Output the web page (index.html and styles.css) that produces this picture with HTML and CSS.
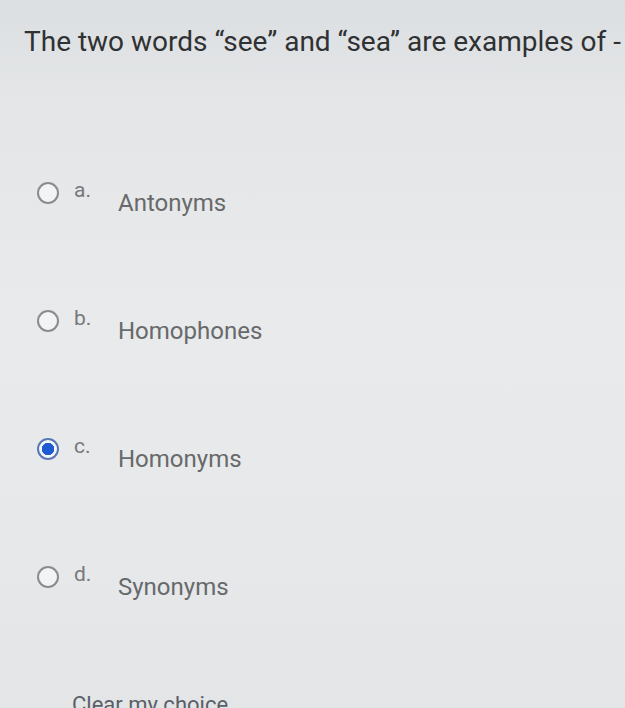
FILE: index.html
```html
<!DOCTYPE html>
<html lang="en">
<head>
<meta charset="utf-8">
<title>Question</title>
<link rel="stylesheet" href="styles.css">
</head>
<body>
<div class="page">
  <h1 class="question">The two words “see” and “sea” are examples of -</h1>
  <div class="options">
    <div class="option">
      <span class="radio"></span>
      <span class="letter">a.</span>
      <span class="answer">Antonyms</span>
    </div>
    <div class="option">
      <span class="radio"></span>
      <span class="letter">b.</span>
      <span class="answer">Homophones</span>
    </div>
    <div class="option">
      <span class="radio checked"></span>
      <span class="letter">c.</span>
      <span class="answer">Homonyms</span>
    </div>
    <div class="option">
      <span class="radio"></span>
      <span class="letter">d.</span>
      <span class="answer">Synonyms</span>
    </div>
  </div>
  <div class="clear">Clear my choice</div>
</div>
</body>
</html>
```
FILE: styles.css
```css
html, body {
  margin: 0;
  padding: 0;
  height: 100%;
  overflow: hidden;
}
body {
  background: linear-gradient(180deg, #dcdfe1 0%, #e4e6e8 15%, #e8eaeb 45%, #e6e8e9 80%, #e3e5e6 100%);
  font-family: Roboto, "Liberation Sans", sans-serif;
}
.page {
  padding: 26px 0 0 24px;
}
.question {
  margin: 0;
  font-size: 28px;
  line-height: 32px;
  font-weight: 400;
  color: #2f3133;
  white-space: nowrap;
}
.options {
  margin-top: 124px;
}
.option {
  display: flex;
  align-items: flex-start;
  height: 128px;
}
.radio {
  box-sizing: border-box;
  width: 22px;
  height: 22px;
  margin-left: 13px;
  border: 2px solid #8a8c8e;
  border-radius: 50%;
  background: #f2f3f4;
  flex: none;
}
.radio.checked {
  border-color: #5a78b4;
  background: radial-gradient(circle, #1d5bd3 0 6px, #f4f6fa 6.5px);
}
.letter {
  width: 44px;
  margin-left: 15px;
  font-size: 21px;
  line-height: 16px;
  color: #76787a;
}
.answer {
  margin-top: 9px;
  font-size: 24px;
  line-height: 24px;
  color: #67696b;
}
.clear {
  margin-left: 48px;
  font-size: 22px;
  line-height: 22px;
  color: #5a6068;
}
```
